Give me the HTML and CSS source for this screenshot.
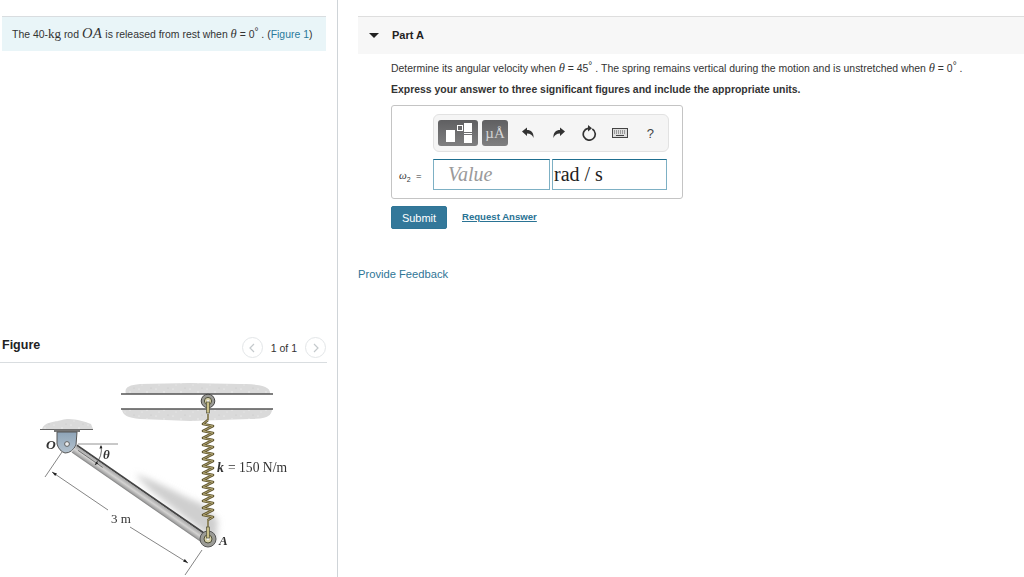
FILE: index.html
```html
<!DOCTYPE html>
<html lang="en">
<head>
<meta charset="utf-8">
<title>Part A</title>
<link rel="stylesheet" href="styles.css">
</head>
<body>
<div class="page">
  <aside class="left">
    <p class="stem">The 40-<span class="serif kg">kg</span> rod <span class="math oa">OA</span> is released from rest when <span class="math theta">θ</span> = 0<sup>°</sup> . (<a class="link">Figure 1</a>)</p>
    <div class="fig-head">
      <h2 class="fig-title">Figure</h2>
      <div class="pager">
        <span class="pg-btn"><svg width="8" height="12" viewBox="0 0 8 12"><path d="M6 2 2 6l4 4" class="chev"/></svg></span>
        <span class="pg-text">1 of 1</span>
        <span class="pg-btn"><svg width="8" height="12" viewBox="0 0 8 12"><path d="M2 2l4 4-4 4" class="chev"/></svg></span>
      </div>
    </div>
    <svg class="figure" width="327" height="214" viewBox="0 363 327 214">
      <defs>
        <linearGradient id="rodg" x1="0" y1="0" x2="0" y2="1">
          <stop offset="0" stop-color="#3a3a3a"/><stop offset=".14" stop-color="#4a4a4a"/><stop offset=".2" stop-color="#a9a9a9"/><stop offset=".55" stop-color="#d4d3d2"/><stop offset=".85" stop-color="#a5a5a5"/><stop offset="1" stop-color="#7c7c7c"/>
        </linearGradient>
        <linearGradient id="brk" x1="0" y1="0" x2="0" y2="1">
          <stop offset="0" stop-color="#8ea4b8"/><stop offset="1" stop-color="#b4c2ce"/>
        </linearGradient>
        <pattern id="speck" width="17" height="9" patternUnits="userSpaceOnUse">
          <circle cx="3" cy="2" r=".6" fill="#f2f2f2"/><circle cx="11" cy="5" r=".7" fill="#f2f2f2"/><circle cx="15" cy="1" r=".5" fill="#bdbdbd"/><circle cx="6" cy="7" r=".5" fill="#f2f2f2"/>
        </pattern>
        <filter id="soft" x="-20%" y="-30%" width="140%" height="160%"><feGaussianBlur stdDeviation="3"/></filter>
        <filter id="edge" x="-5%" y="-30%" width="110%" height="160%"><feGaussianBlur stdDeviation=".6"/></filter>
      </defs>
      <g filter="url(#edge)">
        <path id="c1" d="M126 394C124 388 128 385 140 384L190 383 240 384C262 384 271 387 270 394Z" fill="#dadada"/>
        <path d="M126 394C124 388 128 385 140 384L190 383 240 384C262 384 271 387 270 394Z" fill="url(#speck)"/>
        <path d="M122 409H272C272 416 266 419 250 419L190 421 140 419C128 418 122 415 122 409Z" fill="#dadada"/>
        <path d="M122 409H272C272 416 266 419 250 419L190 421 140 419C128 418 122 415 122 409Z" fill="url(#speck)"/>
        <path d="M42 429C44 422 54 422 62 420 70 417 84 421 91 424L93 429Z" fill="#dadada"/>
        <path d="M42 429C44 422 54 422 62 420 70 417 84 421 91 424L93 429Z" fill="url(#speck)"/>
      </g>
      <path d="M121 394H273M121 409H273" stroke="#555" stroke-width="1.4"/>
      <path d="M40 429.500H93" stroke="#666" stroke-width="1"/>
      <path d="M135 474C160 482 185 498 202 504L218 520 216 542 150 490Z" fill="#cfcfcf" filter="url(#soft)"/>
      <path d="M78 444H118" stroke="#777" stroke-width=".8"/>
      <g transform="translate(74.500 448.500) rotate(34.700)">
        <rect x="0" y="-5" width="158" height="10" fill="url(#rodg)"/>
        <path d="M4-.5H34" stroke="#666" stroke-width=".8"/>
      </g>
      <rect x="54" y="429.500" width="26" height="2.500" fill="#777"/>
      <path d="M57 432H77L76 445Q72 453 65 453 59 451 57 444Z" fill="url(#brk)" stroke="#555" stroke-width="1"/>
      <circle cx="67" cy="444" r="2.400" fill="#eee" stroke="#555" stroke-width=".9"/>
      <path d="M101 446Q103 456 95 465" fill="none" stroke="#444" stroke-width=".8"/>
      <path d="M101 445l-1.600 3.400 3-.2ZM95 465l3.300-1.600-2-1.800Z" fill="#222"/>
      <path d="M208 414V420M208 519V530" stroke="#8f8660" stroke-width="2"/>
      <path class="spring" d="M208 420 203 424 213 426 203 431 213 433 203 438 213 440 203 445 213 447 203 452 213 454 203 459 213 461 203 466 213 468 203 473 213 475 203 480 213 482 203 487 213 489 203 494 213 496 203 501 213 503 203 508 213 510 203 515 213 517 208 520"/>
      <path class="spring-hi" d="M208 420 203 424 213 426 203 431 213 433 203 438 213 440 203 445 213 447 203 452 213 454 203 459 213 461 203 466 213 468 203 473 213 475 203 480 213 482 203 487 213 489 203 494 213 496 203 501 213 503 203 508 213 510 203 515 213 517 208 520"/>
      <circle cx="208" cy="401" r="6.800" fill="#9b9b96" stroke="#444" stroke-width="1"/>
      <circle cx="208" cy="401" r="3.600" fill="#d8d2a8" stroke="#4f4f3a" stroke-width="1"/>
      <circle cx="208" cy="401" r="1.200" fill="#eee"/>
      <rect x="206.500" y="402" width="3" height="11" fill="#c9bf88" stroke="#4f4f3a" stroke-width=".7"/>
      <circle cx="208" cy="539" r="8" fill="#9b9b96" stroke="#555" stroke-width="1"/>
      <circle cx="208" cy="539" r="4" fill="#d8d2a8" stroke="#4f4f3a" stroke-width="1"/>
      <circle cx="208" cy="539" r="1.300" fill="#eee"/>
      <rect x="206.500" y="527" width="3" height="11" fill="#c9bf88" stroke="#4f4f3a" stroke-width=".7"/>
      <path d="M62 452 45 477M52 472 108 510M130 527 188 563M202 550 185 575" fill="none" stroke="#666" stroke-width=".8"/>
      <path d="M52 472l5 1.500-1.800 2.400ZM188 563l-5-1.500 1.800-2.400Z" fill="#222"/>
      <text x="46" y="449" class="t-it t-lg">O</text>
      <text x="103" y="459" class="t-it t-md">θ</text>
      <text x="217" y="472" class="t-it t-kk">k</text>
      <text x="228" y="472" class="t-rm t-kk">= 150 N/m</text>
      <text x="111" y="523" class="t-rm t-md">3 m</text>
      <text x="219" y="545" class="t-it t-md">A</text>
    </svg>
  </aside>
  <main class="right">
    <div class="part-head">
      <span class="caret"></span>
      <h3 class="part-title">Part A</h3>
    </div>
    <div class="part-body">
      <p class="q">Determine its angular velocity when <span class="math theta">θ</span> = 45<sup>°</sup> . The spring remains vertical during the motion and is unstretched when <span class="math theta">θ</span> = 0<sup>°</sup> .</p>
      <p class="q strong">Express your answer to three significant figures and include the appropriate units.</p>
      <div class="answer">
        <div class="toolbar">
          <span class="tb-btn tb-wide">
            <svg width="34" height="24" viewBox="0 0 34 24">
              <rect x="5" y="9" width="9" height="12" fill="#fff"/>
              <rect x="16.500" y="4.500" width="5" height="5" fill="none" stroke="#fff"/>
              <rect x="23" y="2" width="8" height="9" fill="#fff"/>
              <rect x="23" y="12" width="8" height="1" fill="#fff"/>
              <rect x="23" y="14" width="8" height="8" fill="#fff"/>
            </svg>
          </span>
          <span class="tb-btn tb-unit">µÅ</span>
          <span class="tb-ic">
            <svg width="14" height="14" viewBox="0 0 14 14"><path d="M1 5.500 6 1.500V4C10 4 13 6.500 12.500 12 11.500 9 9.500 7.500 6 7.500V10Z" fill="#333"/></svg>
          </span>
          <span class="tb-ic">
            <svg width="14" height="14" viewBox="0 0 14 14"><path d="M13 5.500 8 1.500V4C4 4 1 6.500 1.500 12 2.500 9 4.500 7.500 8 7.500V10Z" fill="#333"/></svg>
          </span>
          <span class="tb-ic">
            <svg width="16" height="16" viewBox="0 0 16 16"><path d="M11.300 4A6 6 0 1 1 7 3.300" fill="none" stroke="#333" stroke-width="1.700"/><path d="M7 0V6.500L11 3.200Z" fill="#333"/></svg>
          </span>
          <span class="tb-ic">
            <svg width="16" height="10" viewBox="0 0 16 10"><rect x=".5" y=".5" width="15" height="9" fill="#ddd" stroke="#444"/><path d="M2 3H14M2 5H14" stroke="#555" stroke-dasharray="1 1"/><path d="M4 7.500H12" stroke="#444"/></svg>
          </span>
          <span class="tb-ic tb-q">?</span>
        </div>
        <div class="ans-row">
          <span class="ans-label"><span class="omega">ω</span><sub>2</sub> &nbsp;=</span>
          <span class="field field-val">Value</span>
          <span class="field field-unit">rad / s</span>
        </div>
      </div>
      <div class="actions">
        <button class="submit">Submit</button>
        <a class="req">Request Answer</a>
      </div>
    </div>
    <a class="feedback">Provide Feedback</a>
  </main>
</div>
</body>
</html>
```
FILE: styles.css
```css
* { box-sizing: border-box; }
html, body { margin: 0; padding: 0; background: #fff; }
body { font-family: "Liberation Sans", Arial, sans-serif; color: #333; overflow: hidden; }
p, h2, h3 { margin: 0; }
sup { font-size: 10px; line-height: 0; vertical-align: 3px; }
.page { display: flex; width: 1024px; height: 577px; overflow: hidden; }
.left { width: 338px; flex: none; height: 577px; border-right: 1px solid #cfd4d8; padding-top: 16px; padding-left: 2px; }
.stem { width: 324px; height: 35px; background: #e9f5f8; border-top: 1px solid #d9dde0; padding-left: 10px; font-size: 10.45px; line-height: 33px; white-space: nowrap; }
.serif { font-family: "Liberation Serif", serif; }
.kg { font-size: 13px; }
.math { font-family: "Liberation Serif", serif; font-style: italic; }
.oa { font-size: 14.5px; letter-spacing: .6px; }
.theta { font-size: 12.5px; }
.link { color: #2a7a9c; }
.fig-head { box-sizing: content-box; width: 327px; height: 23px; margin-top: 282px; margin-left: -2px; padding-bottom: 6px; display: flex; justify-content: space-between; align-items: center; border-bottom: 1px solid #d9dde0; }
.fig-title { font-size: 12.5px; font-weight: bold; padding-left: 2px; color: #222; }
.pager { display: flex; align-items: center; gap: 8px; padding-top: 6px; padding-right: 1px; }
.pg-btn { width: 21px; height: 21px; border: 1px solid #e3e6e8; border-radius: 50%; display: flex; align-items: center; justify-content: center; }
.chev { fill: none; stroke: #c4c9cc; stroke-width: 1.2; }
.pg-text { font-size: 10.5px; }
.figure { display: block; margin-left: -2px; filter: blur(.35px); }
.spring { fill: none; stroke: #5f5530; stroke-width: 2.6; stroke-linejoin: round; }
.spring-hi { fill: none; stroke: #b0a470; stroke-width: 1; stroke-linejoin: round; }
.t-it { font-family: "Liberation Serif", serif; font-style: italic; font-weight: bold; fill: #333; }
.t-rm { font-family: "Liberation Serif", serif; fill: #333; }
.t-md { font-size: 13px; }
.t-kk { font-size: 13.6px; }
.t-lg { font-size: 13.5px; }
.right { flex: 1; min-width: 0; padding-top: 16px; padding-left: 20px; }
.part-head { height: 38px; background: #f7f7f7; border-top: 1px solid #dedede; display: flex; align-items: center; padding-left: 11px; gap: 13px; }
.caret { width: 0; height: 0; border-left: 5px solid transparent; border-right: 5px solid transparent; border-top: 5px solid #222; }
.part-title { font-size: 11px; font-weight: bold; color: #222; position: relative; top: -1px; }
.part-body { padding-left: 33px; }
.q { font-size: 10.45px; line-height: 14px; white-space: nowrap; }
.part-body .q:first-child { margin-top: 7px; }
.strong { font-weight: bold; margin-top: 7px; }
.answer { width: 292px; height: 94px; margin-top: 8px; border: 1px solid #c4c4c4; border-radius: 3px; padding: 8px 0 0 41px; }
.toolbar { width: 236px; height: 38px; background: #f5f5f5; border: 1px solid #e2e2e2; border-radius: 6px; display: flex; align-items: center; padding-left: 4px; }
.tb-btn { height: 26px; border-radius: 3px; background: linear-gradient(#5f5f61, #7f7f80); display: flex; align-items: center; justify-content: center; color: #d5d5d5; }
.tb-wide { width: 40px; margin-right: 4px; }
.tb-unit { width: 26px; font-family: "Liberation Serif", serif; font-size: 15px; margin-right: 5px; }
.tb-ic { width: 30.500px; display: flex; justify-content: center; align-items: center; }
.tb-q { font-size: 13px; color: #444; }
.ans-row { display: flex; align-items: center; margin-top: 7px; margin-left: -41px; }
.ans-label { width: 41px; padding-left: 7px; font-size: 9.5px; white-space: nowrap; color: #333; }
.ans-label sub { font-size: 7px; line-height: 0; }
.omega { font-family: "Liberation Serif", serif; font-style: italic; font-size: 11px; }
.field { height: 31px; border: 1px solid #7db0c4; border-top-color: #1f6f90; background: #fff; font-family: "Liberation Serif", serif; font-size: 20px; line-height: 29px; display: block; }
.field-val { width: 117px; margin-right: 2px; padding-left: 14px; font-style: italic; color: #9a9a9a; }
.field-unit { width: 115px; padding-left: 1px; color: #222; }
.actions { display: flex; align-items: center; margin-top: 7px; gap: 15px; }
.submit { width: 56px; height: 23px; padding: 0; border: 1px solid #2f7596; border-radius: 2px; background: #33789a; color: #fff; font-family: "Liberation Sans", Arial, sans-serif; font-size: 11px; }
.req { font-size: 9.6px; font-weight: bold; color: #2a7394; text-decoration: underline; position: relative; top: -1px; }
.feedback { display: block; margin-top: 39px; font-size: 11.2px; color: #2f7596; }
```
